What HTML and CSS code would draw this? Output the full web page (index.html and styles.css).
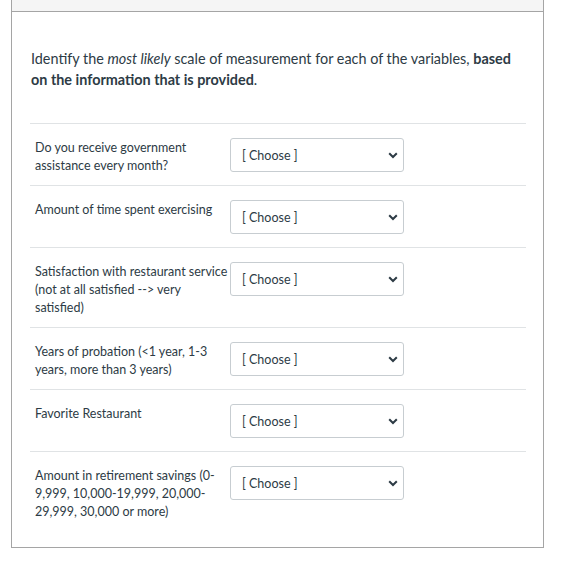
FILE: index.html
```html
<!DOCTYPE html>
<html lang="en">
<head>
<meta charset="utf-8">
<title>Quiz question</title>
<link rel="stylesheet" href="styles.css">
</head>
<body>
<div class="card">
  <div class="card-header"></div>
  <div class="card-body">
    <p class="question-text">Identify the <em>most likely</em> scale of measurement for each of the variables, <strong>based on the information that is provided</strong>.</p>
    <div class="answers">
      <div class="answer">
        <div class="answer-label">Do you receive government assistance every month?</div>
        <div class="select-wrap"><select class="choose"><option>[ Choose ]</option></select><svg class="chev" viewBox="0 0 10 7" width="10" height="7"><path d="M1.2 1.2 L5 5 L8.8 1.2" fill="none" stroke="#2d3b45" stroke-width="2"/></svg></div>
      </div>
      <div class="answer">
        <div class="answer-label">Amount of time spent exercising</div>
        <div class="select-wrap"><select class="choose"><option>[ Choose ]</option></select><svg class="chev" viewBox="0 0 10 7" width="10" height="7"><path d="M1.2 1.2 L5 5 L8.8 1.2" fill="none" stroke="#2d3b45" stroke-width="2"/></svg></div>
      </div>
      <div class="answer">
        <div class="answer-label">Satisfaction with restaurant service (not at all satisfied --&gt; very satisfied)</div>
        <div class="select-wrap"><select class="choose"><option>[ Choose ]</option></select><svg class="chev" viewBox="0 0 10 7" width="10" height="7"><path d="M1.2 1.2 L5 5 L8.8 1.2" fill="none" stroke="#2d3b45" stroke-width="2"/></svg></div>
      </div>
      <div class="answer">
        <div class="answer-label">Years of probation (&lt;1 year, 1-3 years, more than 3 years)</div>
        <div class="select-wrap"><select class="choose"><option>[ Choose ]</option></select><svg class="chev" viewBox="0 0 10 7" width="10" height="7"><path d="M1.2 1.2 L5 5 L8.8 1.2" fill="none" stroke="#2d3b45" stroke-width="2"/></svg></div>
      </div>
      <div class="answer">
        <div class="answer-label">Favorite Restaurant</div>
        <div class="select-wrap"><select class="choose"><option>[ Choose ]</option></select><svg class="chev" viewBox="0 0 10 7" width="10" height="7"><path d="M1.2 1.2 L5 5 L8.8 1.2" fill="none" stroke="#2d3b45" stroke-width="2"/></svg></div>
      </div>
      <div class="answer">
        <div class="answer-label">Amount in retirement savings (0-9,999, 10,000-19,999, 20,000-29,999, 30,000 or more)</div>
        <div class="select-wrap"><select class="choose"><option>[ Choose ]</option></select><svg class="chev" viewBox="0 0 10 7" width="10" height="7"><path d="M1.2 1.2 L5 5 L8.8 1.2" fill="none" stroke="#2d3b45" stroke-width="2"/></svg></div>
      </div>
    </div>
  </div>
</div>
</body>
</html>
```

FILE: styles.css
```css
html, body {
  margin: 0;
  padding: 0;
  background: #ffffff;
}
body {
  font-family: Lato, "Noto Sans", sans-serif;
  color: #2d3b45;
}
.card {
  margin-left: 11px;
  width: 531px;
  border: 1px solid #a5a5a5;
  border-top: none;
}
.card-header {
  height: 11px;
  background: #f5f5f5;
  border-bottom: 1px solid #a5a5a5;
}
.card-body {
  padding: 36px 17px 16px 18px;
}
.question-text {
  margin: 0;
  padding-left: 1px;
  font-size: 14.4px;
  line-height: 21px;
}
.question-text strong {
  font-weight: 700;
}
.answers {
  margin-top: 33px;
}
.answer {
  display: flex;
  align-items: flex-start;
  border-top: 1px solid #e0e3e5;
  padding: 14px 0 10px 5px;
}
.answer-label {
  width: 195px;
  padding-top: 1px;
  font-size: 12.5px;
  line-height: 18px;
}
.select-wrap {
  position: relative;
  width: 174px;
  height: 34px;
  margin-bottom: 3px;
}
.choose {
  appearance: none;
  -webkit-appearance: none;
  width: 174px;
  height: 34px;
  margin: 0;
  padding: 0 24px 0 11px;
  border: 1px solid #c7cdd1;
  border-radius: 3px;
  background: #ffffff;
  font-family: Lato, "Noto Sans", sans-serif;
  font-size: 12.5px;
  color: #2d3b45;
}
.chev {
  position: absolute;
  right: 6px;
  top: 14px;
}
```
